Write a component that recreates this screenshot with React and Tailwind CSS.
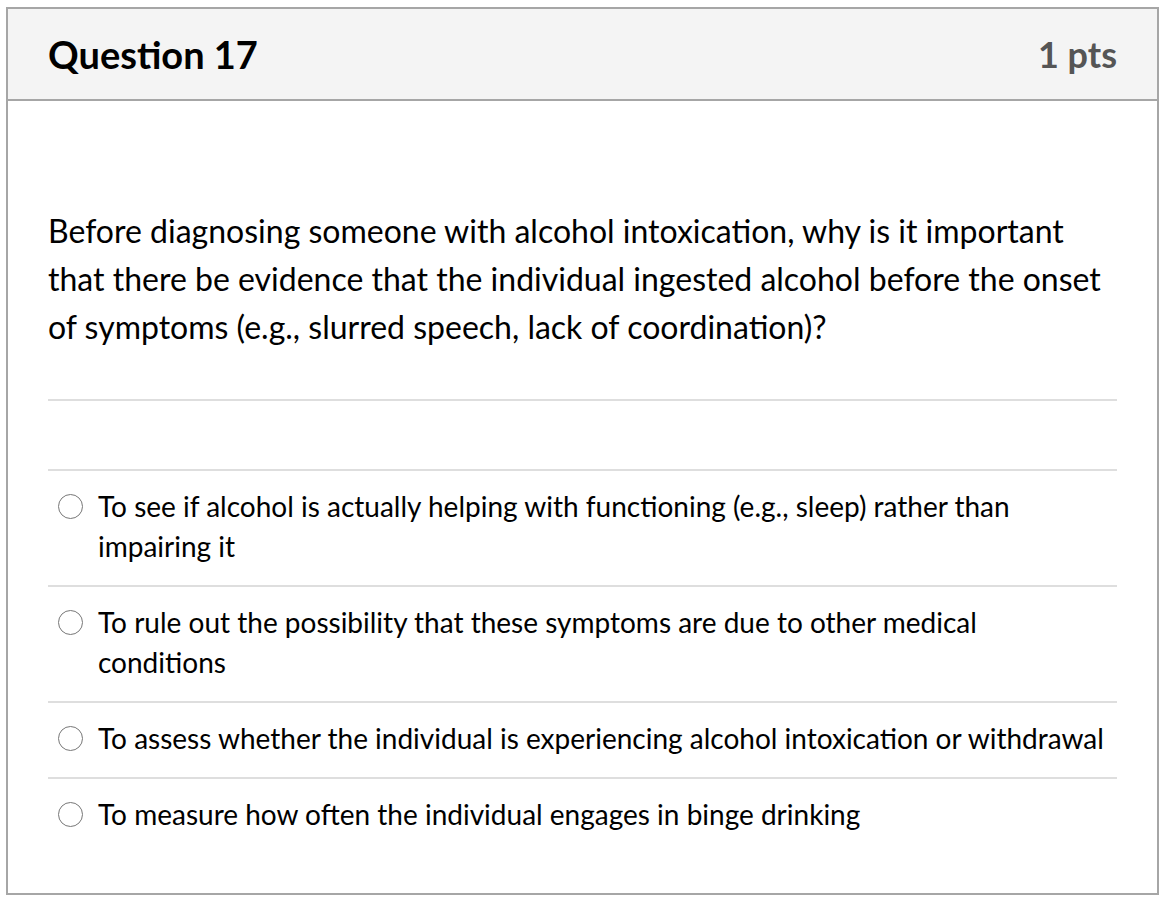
import React from "react";

const options = [
  "To see if alcohol is actually helping with functioning (e.g., sleep) rather than impairing it",
  "To rule out the possibility that these symptoms are due to other medical conditions",
  "To assess whether the individual is experiencing alcohol intoxication or withdrawal",
  "To measure how often the individual engages in binge drinking",
];

export default function App() {
  return (
    <div className="w-[1170px] h-[906px] bg-white pt-[7px] pl-[6px]" style={{ fontFamily: "Lato, 'Noto Sans', sans-serif" }}>
      <div className="w-[1153px] h-[888px] border-2 border-[#a6a6a6] flex flex-col">
        <div className="h-[92px] bg-[#f4f4f4] border-b-2 border-[#a6a6a6] flex items-center justify-between px-[40px]">
          <div className="text-[38px] font-bold text-black leading-none">Question 17</div>
          <div className="text-[36px] font-bold text-[#555555] leading-none">1 pts</div>
        </div>
        <div className="px-[40px] pt-[106px]">
          <p className="text-[32px] leading-[48px] text-black">
            Before diagnosing someone with alcohol intoxication, why is it important that there be evidence that the individual ingested alcohol before the onset of symptoms (e.g., slurred speech, lack of coordination)?
          </p>
          <div className="mt-[48px] h-[2px] bg-[#dedede]" />
          <div className="h-[68px]" />
          {options.map((o, i) => (
            <div key={i} className="border-t-2 border-[#dedede]">
              <div className="flex items-start pt-[15px] pb-[19px]">
                <div className="w-[50px] shrink-0 flex pt-[8px] pl-[10px]">
                  <span className="w-[25px] h-[25px] rounded-full border-[1.5px] border-[#777777] bg-white" />
                </div>
                <div className="text-[28px] leading-[40px] text-black pr-[8px]">{o}</div>
              </div>
            </div>
          ))}
        </div>
      </div>
    </div>
  );
}
